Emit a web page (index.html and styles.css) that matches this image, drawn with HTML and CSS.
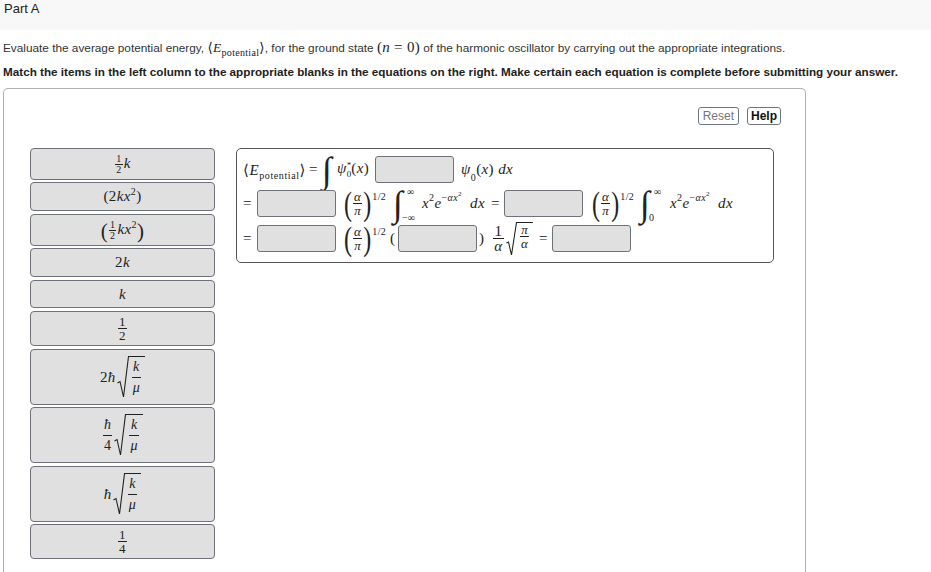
FILE: index.html
```html
<!DOCTYPE html>
<html lang="en">
<head>
  <meta charset="UTF-8" />
  <title>Part A</title>
  <link rel="stylesheet" href="styles.css">
</head>
<body>
  <div class="part-head">Part A</div>

  <p class="intro">Evaluate the average potential energy, <span class="m inline-m">⟨<i>E</i><sub>potential</sub>⟩</span>, for the ground state <span class="m inline-m big">(<i>n</i> = 0)</span> of the harmonic oscillator by carrying out the appropriate integrations.</p>
  <p class="task">Match the items in the left column to the appropriate blanks in the equations on the right. Make certain each equation is complete before submitting your answer.</p>

  <div class="box">
    <div class="tools">
      <button class="tool muted">Reset</button>
      <button class="tool">Help</button>
    </div>

    <div class="work">
      <!-- draggable items -->
      <div class="items">
        <div class="item h32 m"><span><span class="frac small"><span>1</span><span>2</span></span><i>k</i></span></div>
        <div class="item h29 mt2 m"><span>(2<i>kx</i><sup>2</sup>)</span></div>
        <div class="item h32 mt3 m"><span><span class="paren">(</span><span class="frac small"><span>1</span><span>2</span></span><i>kx</i><sup>2</sup><span class="paren">)</span></span></div>
        <div class="item h29 mt2 m"><span>2<i>k</i></span></div>
        <div class="item h28 mt3 m"><i>k</i></div>
        <div class="item h35 mt3 m"><span class="frac"><span>1</span><span>2</span></span></div>
        <div class="item h56 mt3 m"><span>2<i>ħ</i></span>
          <span class="root">
            <svg class="surd" width="12" height="43" viewBox="0 0 12 43"><path d="M0.5 27 L3 25.5 L6.5 41 L11.5 0.5" fill="none" stroke="#222" stroke-width="1.1"/></svg>
            <span class="under"><span class="frac tall"><span><i>k</i></span><span><i>μ</i></span></span></span>
          </span>
        </div>
        <div class="item h56 mt2 m"><span class="frac tall"><span><i>ħ</i></span><span>4</span></span>
          <span class="root">
            <svg class="surd" width="12" height="43" viewBox="0 0 12 43"><path d="M0.5 27 L3 25.5 L6.5 41 L11.5 0.5" fill="none" stroke="#222" stroke-width="1.1"/></svg>
            <span class="under"><span class="frac tall"><span><i>k</i></span><span><i>μ</i></span></span></span>
          </span>
        </div>
        <div class="item h56 mt3 m"><i>ħ</i>
          <span class="root">
            <svg class="surd" width="12" height="43" viewBox="0 0 12 43"><path d="M0.5 27 L3 25.5 L6.5 41 L11.5 0.5" fill="none" stroke="#222" stroke-width="1.1"/></svg>
            <span class="under"><span class="frac tall"><span><i>k</i></span><span><i>μ</i></span></span></span>
          </span>
        </div>
        <div class="item h35 mt2 m"><span class="frac"><span>1</span><span>4</span></span></div>
      </div>

      <!-- equations with blanks -->
      <div class="eqs m">
        <div class="eq eq1">
          <span class="seg w60 lhs">⟨<i>E</i><sub>potential</sub>⟩</span>
          <span class="rel ml5">=</span>
          <span class="int ml3 w15">∫</span>
          <span class="seg w36"><i>ψ</i><span class="scripts"><span>*</span><span>0</span></span>(<i>x</i>)</span>
          <span class="blank ml2"></span>
          <span class="seg ml7"><i>ψ</i><sub class="low">0</sub>(<i>x</i>) <i>dx</i></span>
        </div>
        <div class="eq eq2">
          <span class="rel">=</span>
          <span class="blank ml4"></span>
          <span class="group ml8">
            <span class="paren-lg">(</span><span class="frac"><span><i>α</i></span><span><i>π</i></span></span><span class="paren-lg">)</span><sup class="pow">1/2</sup>
          </span>
          <span class="int wide ml3 w29">∫<span class="limits"><span>∞</span><span>−∞</span></span></span>
          <span class="seg w40"><i>x</i><sup>2</sup><i>e</i><sup>−<i>αx</i><sup class="sup2">2</sup></sup></span>
          <span class="seg ml8 w18"><i>dx</i></span>
          <span class="rel ml2">=</span>
          <span class="blank ml3"></span>
          <span class="group ml9">
            <span class="paren-lg">(</span><span class="frac"><span><i>α</i></span><span><i>π</i></span></span><span class="paren-lg">)</span><sup class="pow">1/2</sup>
          </span>
          <span class="int wide ml2 w30">∫<span class="limits"><span>∞</span><span>0</span></span></span>
          <span class="seg w42"><i>x</i><sup>2</sup><i>e</i><sup>−<i>αx</i><sup class="sup2">2</sup></sup></span>
          <span class="seg ml6"><i>dx</i></span>
        </div>
        <div class="eq eq3">
          <span class="rel">=</span>
          <span class="blank ml4"></span>
          <span class="group ml8">
            <span class="paren-lg">(</span><span class="frac"><span><i>α</i></span><span><i>π</i></span></span><span class="paren-lg">)</span><sup class="pow">1/2</sup>
          </span>
          <span class="seg w8">(</span>
          <span class="blank"></span>
          <span class="seg ml2 w6">)</span>
          <span class="frac one-over"><span>1</span><span><i>α</i></span></span>
          <span class="root eq-root">
            <svg class="surd" width="11" height="34" viewBox="0 0 11 34"><path d="M0.5 21 L2.5 20 L5.5 33 L10.5 0.5" fill="none" stroke="#222" stroke-width="1.1"/></svg>
            <span class="under"><span class="frac"><span><i>π</i></span><span><i>α</i></span></span></span>
          </span>
          <span class="rel">=</span>
          <span class="blank ml3"></span>
        </div>
      </div>
    </div>
  </div>
</body>
</html>
```

FILE: styles.css
```css
html {
  height: 100%;
}
body {
  margin: 0;
  font-family: 'Liberation Sans', Arial, sans-serif;
  font-size: 11.8px;
  color: #333;
  background: #fff;
}
.part-head {
  height: 30px;
  background: #f8f8f8;
  padding: 1px 0 0 4px;
  box-sizing: border-box;
  font-size: 13px;
  line-height: 15px;
  color: #222;
}
.intro {
  margin: 8px 0 0 3px;
  line-height: 18px;
  white-space: nowrap;
}
.task {
  margin: 7px 0 0 3px;
  font-size: 11.7px;
  line-height: 15px;
  font-weight: bold;
  color: #222;
  white-space: nowrap;
}
/* the box runs on past the bottom of the window */
.box {
  margin: 9px 0 0 3px;
  width: 803px;
  height: 484px;
  box-sizing: border-box;
  border: 1px solid #b0b0b0;
  border-bottom: none;
  border-radius: 5px 5px 0 0;
  padding: 18px 24px 0 26px;
}
.tools {
  display: flex;
  justify-content: flex-end;
  gap: 8px;
  height: 41px;
  align-items: flex-start;
}
.tool {
  font-family: inherit;
  font-size: 12px;
  font-weight: bold;
  height: 18px;
  padding: 0 3px;
  background: #fff;
  border: 1px solid #6d7680;
  border-radius: 3px;
  color: #111;
}
.tool.muted {
  font-weight: normal;
  color: #777;
  padding: 0 4px;
}

.work {
  display: flex;
  gap: 21px;
}
.items {
  width: 185px;
  display: flex;
  flex-direction: column;
}
.item {
  display: flex;
  align-items: center;
  justify-content: center;
  box-sizing: border-box;
  background: #e0e0e0;
  border: 1px solid #6f7178;
  border-radius: 4px;
}
.h28 { height: 28px; }
.h29 { height: 29px; }
.h32 { height: 32px; }
.h35 { height: 35px; }
.h56 { height: 56px; }
.mt2 { margin-top: 2px; }
.mt3 { margin-top: 3px; }

/* math bits */
.m {
  font-family: 'Liberation Serif', 'DejaVu Serif', serif;
  font-size: 15px;
  letter-spacing: 0.4px;
  color: #222;
}
.inline-m {
  font-size: 13.5px;
  letter-spacing: 0.3px;
}
.inline-m.big {
  font-size: 15px;
}
.m sup, .m sub {
  font-size: 10px;
  line-height: 0;
}
.frac {
  display: inline-flex;
  flex-direction: column;
  align-items: center;
  vertical-align: middle;
  font-size: 13px;
  line-height: 13px;
  margin: 0 1px;
}
.frac > span {
  padding: 0 1px;
  align-self: stretch;
  text-align: center;
}
.frac > span + span {
  border-top: 1px solid #222;
}
.frac.small {
  font-size: 10px;
  line-height: 10px;
}
.frac.tall {
  font-size: 14px;
  line-height: 20px;
}
.frac.one-over {
  flex: none;
  width: 11px;
  margin: 0 0 0 8px;
  font-size: 15px;
  line-height: 14px;
}
.paren {
  font-size: 21px;
  vertical-align: middle;
  line-height: 20px;
}
.root {
  display: inline-flex;
  align-items: flex-start;
  margin-left: 1px;
}
.under {
  border-top: 1px solid #222;
  padding: 0 3px;
}
.surd {
  display: block;
  margin-right: -1px;
}

.eqs {
  box-sizing: border-box;
  width: 538px;
  height: 115px;
  border: 1px solid #555;
  border-radius: 5px;
  padding: 6px 0 0 6px;
}
.eq {
  display: flex;
  align-items: center;
  white-space: pre;
}
.eq1 { height: 29px; }
.eq2 { height: 33px; margin: 3px 0 0 -1px; }
.eq3 { height: 35px; margin: 1px 0 0 -1px; }

.seg {
  flex: none;
  display: block;
}
.lhs {
  letter-spacing: 0.6px;
}
.rel {
  flex: none;
  width: 11px;
  text-align: center;
  font-size: 15px;
}
.int {
  flex: none;
  font-size: 36px;
  line-height: 30px;
  letter-spacing: 0;
}
.int.wide {
  position: relative;
}
.limits {
  position: absolute;
  left: 9px;
  top: -3px;
  bottom: -4px;
  display: flex;
  flex-direction: column;
  justify-content: space-between;
  font-size: 10px;
  line-height: 11px;
}
.limits span:first-child {
  margin-left: 5px;
}
.low {
  position: relative;
  top: 3px;
}
.scripts {
  display: inline-flex;
  flex-direction: column;
  vertical-align: middle;
  font-size: 9px;
  line-height: 9px;
  letter-spacing: 0;
}
.group {
  flex: none;
  display: inline-flex;
  align-items: center;
  width: 46px;
}
.paren-lg {
  font-size: 24px;
  line-height: 30px;
  letter-spacing: 0;
  transform: scaleY(1.4);
}
.pow {
  align-self: flex-start;
  margin-top: 8px;
  margin-left: 1px;
  letter-spacing: 0.4px;
}
.sup2 {
  font-size: 7px !important;
}
.seg sup {
  position: relative;
  top: -1px;
}
.blank {
  flex: none;
  box-sizing: border-box;
  width: 79px;
  height: 27px;
  background: #e0e0e0;
  border: 1px solid #6f7178;
  border-radius: 3px;
}
.eq-root {
  flex: none;
  width: 32px;
  margin-left: 2px;
}

/* small offsets and widths for the equation pieces */
.ml2 { margin-left: 2px; }
.ml3 { margin-left: 3px; }
.ml4 { margin-left: 4px; }
.ml5 { margin-left: 5px; }
.ml6 { margin-left: 6px; }
.ml7 { margin-left: 7px; }
.ml8 { margin-left: 8px; }
.ml9 { margin-left: 9px; }
.w6 { width: 6px; }
.w8 { width: 8px; }
.w15 { width: 15px; }
.w18 { width: 18px; }
.w29 { width: 29px; }
.w30 { width: 30px; }
.w36 { width: 36px; }
.w40 { width: 40px; }
.w42 { width: 42px; }
.w60 { width: 60px; }
```
